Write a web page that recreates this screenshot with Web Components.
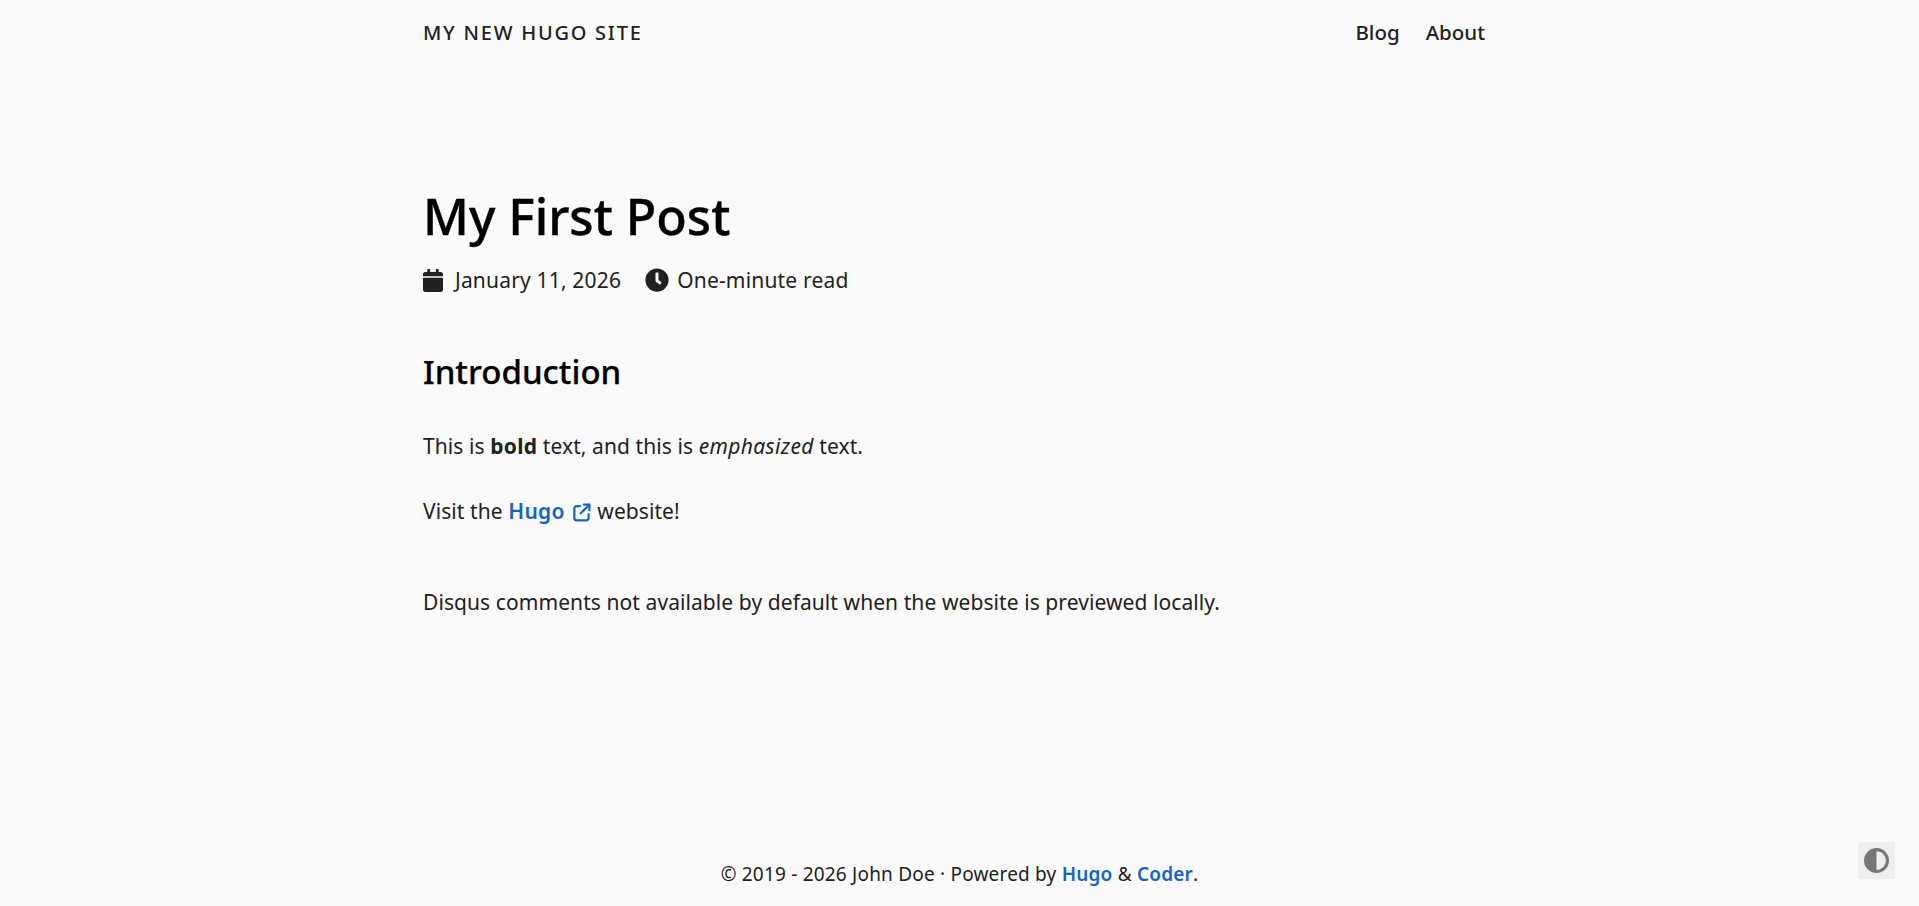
<!doctype html>
<html lang="en"><head><meta charset="utf-8"><title>My First Post</title>
<style>
html,body{margin:0;padding:0;background:#fafafa}
body{font-family:"Noto Sans","Open Sans",sans-serif;color:#212121}
post-para b{letter-spacing:.3px}
post-para i{letter-spacing:.35px}
</style></head>
<body>
<site-app>
  <site-nav slot="nav" brand="MY NEW HUGO SITE">
    <nav-link>Blog</nav-link>
    <nav-link>About</nav-link>
  </site-nav>
  <post-page>
    <span slot="title">My First Post</span>
    <post-meta slot="meta" icon="calendar">January 11, 2026</post-meta>
    <post-meta slot="meta" icon="clock">One-minute read</post-meta>
    <post-section heading="Introduction">
      <post-para>This is <b>bold</b> text, and this is <i>emphasized</i> text.</post-para>
      <post-para>Visit the <ext-link>Hugo</ext-link> website!</post-para>
    </post-section>
    <post-para slot="after">Disqus comments not available by default when the website is previewed locally.</post-para>
  </post-page>
  <site-footer slot="footer">© 2019 - 2026 John Doe · Powered by <foot-link>Hugo</foot-link> &amp; <foot-link>Coder</foot-link>.</site-footer>
</site-app>
<theme-toggle></theme-toggle>
<script>
function def(name,html){
  customElements.define(name,class extends HTMLElement{
    connectedCallback(){
      if(this.shadowRoot)return;
      const s=this.attachShadow({mode:'open'});
      s.innerHTML=typeof html==='function'?html(this):html;
    }
  });
}
const CAL='M12 192h424c6.6 0 12 5.4 12 12v260c0 26.5-21.5 48-48 48H48c-26.5 0-48-21.5-48-48V204c0-6.6 5.4-12 12-12zm436-44v-36c0-26.5-21.5-48-48-48h-48V12c0-6.6-5.4-12-12-12h-40c-6.6 0-12 5.4-12 12v52H160V12c0-6.6-5.4-12-12-12h-40c-6.6 0-12 5.4-12 12v52H48C21.5 64 0 85.5 0 112v36c0 6.6 5.4 12 12 12h424c6.6 0 12-5.4 12-12z';
const CLK='M256,8C119,8,8,119,8,256S119,504,256,504,504,393,504,256,393,8,256,8Zm92.49,313h0l-20,25a16,16,0,0,1-22.49,2.5h0l-67-49.72a40,40,0,0,1-15-31.23V112a16,16,0,0,1,16-16h32a16,16,0,0,1,16,16V256l58,42.5A16,16,0,0,1,348.49,321Z';
def('site-app',`<style>:host{display:flex;flex-direction:column;min-height:906px;box-sizing:border-box}
.main{flex:1}</style><slot name="nav"></slot><div class="main"><slot></slot></div><slot name="footer"></slot>`);
def('site-nav',h=>`<style>:host{display:block;width:1073px;margin:0 auto;box-sizing:border-box;padding:0 11px 0 0}
.bar{display:flex;justify-content:space-between;align-items:center;height:64px}
.brand{font-size:20px;font-weight:500;letter-spacing:1.75px;color:#212121}
.links{display:flex;gap:26px}</style>
<div class="bar"><span class="brand">${h.getAttribute('brand')}</span><div class="links"><slot></slot></div></div>`);
def('nav-link',`<style>:host{display:block;font-size:20.5px;font-weight:500;color:#212121}</style><slot></slot>`);
def('post-page',`<style>:host{display:block;width:1073px;margin:0 auto;padding-top:112px}
h1{margin:0;font-size:50px;font-weight:500;line-height:80px;color:#000;-webkit-text-stroke:.4px #000}
.meta{display:flex;gap:24px;margin-top:5px;height:38px;align-items:center}
.after{margin-top:55px}</style>
<h1><slot name="title"></slot></h1><div class="meta"><slot name="meta"></slot></div><slot></slot><div class="after"><slot name="after"></slot></div>`);
def('post-meta',h=>{const cal=h.getAttribute('icon')==='calendar';return `<style>:host{display:flex;align-items:center;font-size:21px;letter-spacing:.18px;line-height:38px}
svg{fill:#212121;display:block;flex:none;margin-right:${cal?12:8}px}</style>
${cal?`<svg width="20" height="23" viewBox="0 0 448 512"><path d="${CAL}"/></svg>`:`<svg width="24" height="24" viewBox="0 0 512 512"><path d="${CLK}"/></svg>`}<span><slot></slot></span>`});
def('post-section',h=>`<style>:host{display:block;margin-top:47px}
h2{margin:0 0 30px;font-size:33px;font-weight:500;line-height:52px;color:#000;-webkit-text-stroke:.25px #000}
::slotted(post-para){margin-bottom:29px}</style><h2>${h.getAttribute('heading')}</h2><slot></slot>`);
def('post-para',`<style>:host{display:block;font-size:21px;letter-spacing:.08px;line-height:36px;color:#212121}</style><slot></slot>`);
def('ext-link',`<style>:host{display:inline;color:#1565c0;font-weight:600;letter-spacing:.3px}
svg{display:inline-block;vertical-align:-3px;margin:0 1px 0 7px;fill:none;stroke:#1565c0;stroke-width:2.8;stroke-linecap:round;stroke-linejoin:round}</style>
<slot></slot><svg width="19" height="19" viewBox="0 0 24 24"><path d="M10 4H6a3 3 0 0 0-3 3v12a3 3 0 0 0 3 3h12a3 3 0 0 0 3-3v-5"/><path d="M15 2h7v7"/><path d="M21.5 2.5 11 13"/></svg>`);
def('site-footer',`<style>:host{display:block;text-align:center;font-size:19px;letter-spacing:.2px;line-height:32px;color:#212121;padding:0 0 16px}</style><slot></slot>`);
def('foot-link',`<style>:host{display:inline;color:#1565c0;font-weight:600}</style><slot></slot>`);
def('theme-toggle',`<style>:host{position:fixed;left:1858px;top:842px;width:37px;height:37px;background:#eee;border-radius:2px;display:flex;align-items:center;justify-content:center}
svg{fill:#777;display:block}</style><svg width="25" height="25" viewBox="0 0 512 512"><path d="M448 256c0-106-86-192-192-192V448c106 0 192-86 192-192zM0 256a256 256 0 1 1 512 0A256 256 0 1 1 0 256z"/></svg>`);
</script>
</body></html>
